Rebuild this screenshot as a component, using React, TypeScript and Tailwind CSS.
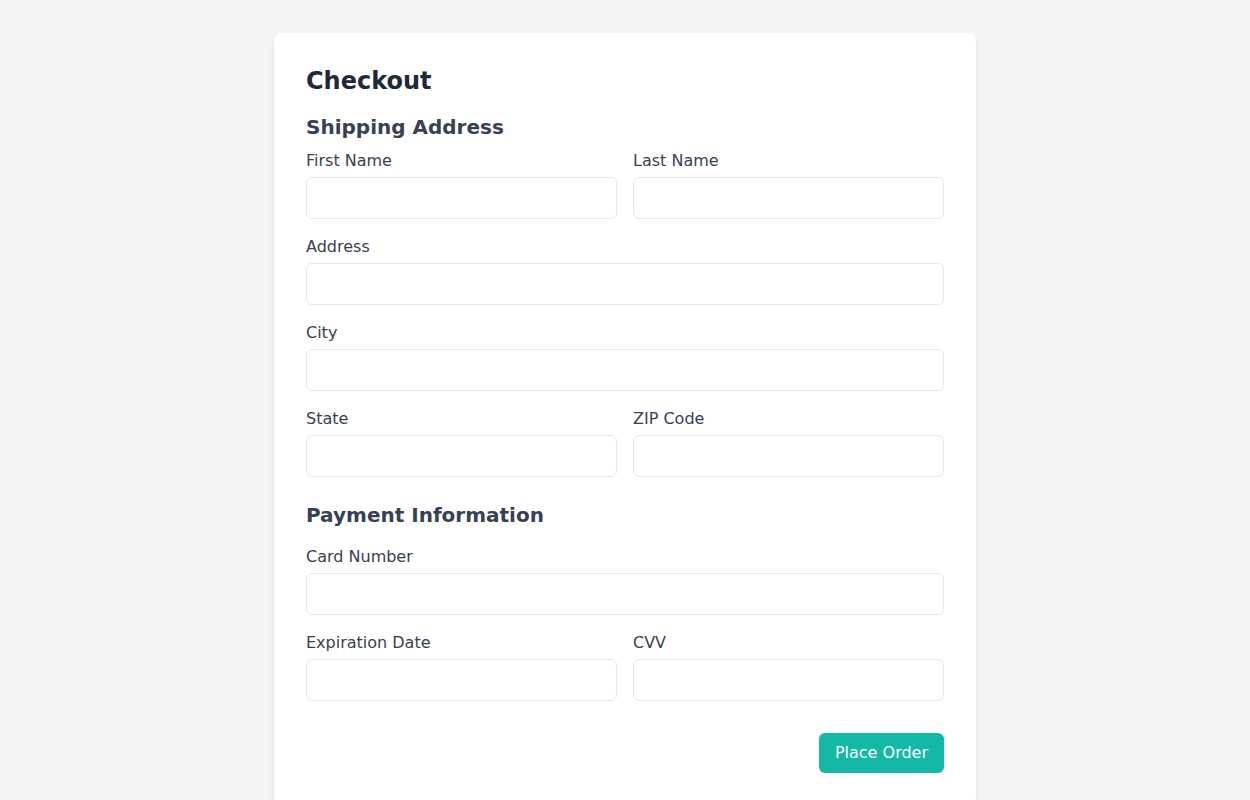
export default function App() {
  const field = (label: string, type = "text") => (
    <div className="mb-4">
      <label className="mb-1 block text-base text-gray-700">{label}</label>
      <input
        type={type}
        className="block w-full rounded-md border border-gray-200 bg-white px-3 py-2 text-base leading-6 text-gray-800 outline-none"
      />
    </div>
  );

  return (
    <div
      className="min-h-screen bg-gray-100 pt-[33px]"
      style={{ fontFamily: '"DejaVu Sans", sans-serif' }}
    >
      <div className="mx-auto w-[702px] rounded-lg bg-white p-8 shadow-md">
        <h1 className="mb-4 text-2xl font-bold text-gray-800">Checkout</h1>

        {/* Shipping */}
        <h2 className="mb-2 text-xl font-semibold text-gray-700">Shipping Address</h2>
        <div className="grid grid-cols-2 gap-x-4">
          {field("First Name")}
          {field("Last Name")}
        </div>
        {field("Address")}
        {field("City")}
        <div className="grid grid-cols-2 gap-x-4">
          {field("State")}
          {field("ZIP Code")}
        </div>

        {/* Payment */}
        <h2 className="mt-2 mb-4 text-xl font-semibold text-gray-700">Payment Information</h2>
        {field("Card Number")}
        <div className="grid grid-cols-2 gap-x-4">
          {field("Expiration Date")}
          {field("CVV")}
        </div>

        <div className="mt-4 flex justify-end">
          <button
            type="button"
            className="rounded-md bg-[#14b8a6] px-4 py-2 text-base text-white"
          >
            Place Order
          </button>
        </div>
      </div>
    </div>
  );
}
